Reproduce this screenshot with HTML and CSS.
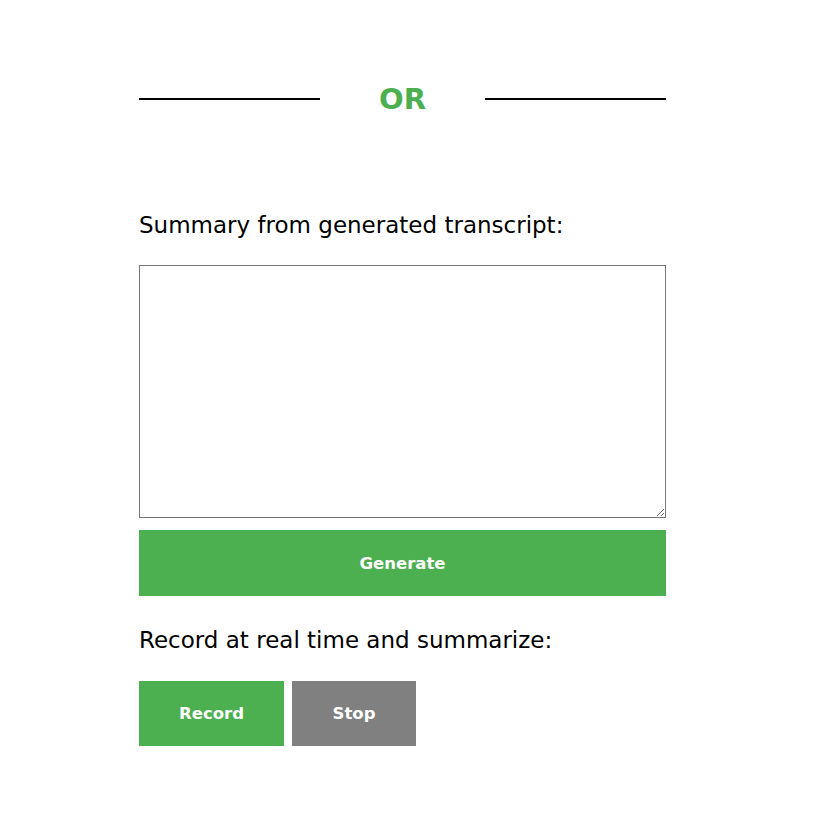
FILE: index.html
```html
<!DOCTYPE html>
<html>
<head>
<meta charset="utf-8">
<link rel="stylesheet" href="styles.css">
</head>
<body>
<div class="page">
  <div class="divider">
    <span class="line"></span>
    <span class="or">OR</span>
    <span class="line"></span>
  </div>
  <p class="label first">Summary from generated transcript:</p>
  <textarea class="box"></textarea>
  <button class="btn wide">Generate</button>
  <p class="label second">Record at real time and summarize:</p>
  <div class="row">
    <button class="btn record">Record</button>
    <button class="btn stop">Stop</button>
  </div>
</div>
</body>
</html>
```
FILE: styles.css
```css
html, body {
  margin: 0;
  padding: 0;
  background: #ffffff;
}
.page {
  width: 527px;
  margin-left: 139px;
  padding-top: 79px;
  font-family: "Comic Sans MS", "DejaVu Sans", sans-serif;
  color: #000;
}
.divider {
  display: flex;
  align-items: center;
  height: 40px;
}
.line {
  display: block;
  width: 181px;
  height: 2px;
  background: #000;
}
.or {
  flex: 1;
  text-align: center;
  color: #4caf50;
  font-weight: bold;
  font-size: 29px;
  line-height: 42px;
}
.label {
  margin: 0;
  font-size: 23px;
  line-height: 30px;
}
.label.first {
  margin-top: 91px;
}
.box {
  display: block;
  box-sizing: border-box;
  width: 527px;
  height: 253px;
  margin: 25px 0 0 0;
  border: 1px solid #767676;
  padding: 2px;
  resize: both;
}
.btn {
  border: none;
  color: #fff;
  font-family: "Comic Sans MS", "DejaVu Sans", sans-serif;
  font-weight: bold;
  font-size: 16.5px;
  padding: 0;
  margin: 0;
  display: block;
}
.wide {
  width: 527px;
  height: 66px;
  margin-top: 12px;
  background: #4caf50;
}
.label.second {
  margin-top: 29px;
}
.row {
  display: flex;
  gap: 8px;
  margin-top: 26px;
}
.record {
  width: 145px;
  height: 65px;
  background: #4caf50;
}
.stop {
  width: 124px;
  height: 65px;
  background: #808080;
}
```
